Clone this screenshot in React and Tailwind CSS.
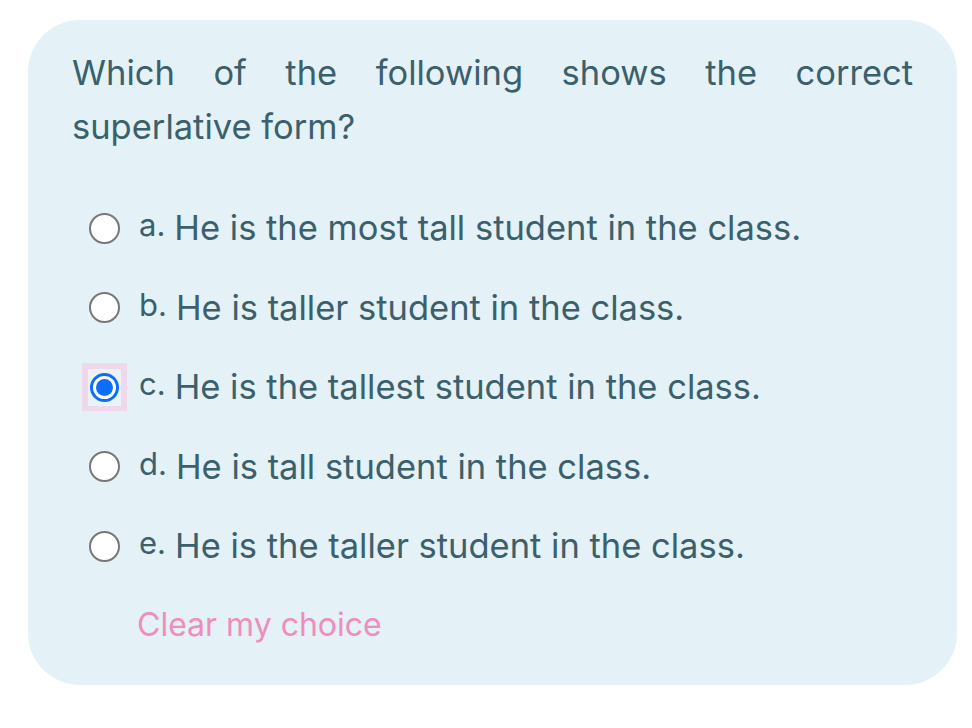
import React from "react";

const options = [
  { l: "a.", t: "He is the most tall student in the class." },
  { l: "b.", t: "He is taller student in the class." },
  { l: "c.", t: "He is the tallest student in the class.", checked: true },
  { l: "d.", t: "He is tall student in the class." },
  { l: "e.", t: "He is the taller student in the class." },
];

function Radio({ checked }) {
  if (checked) {
    return (
      <div className="w-[45px] h-[48px] bg-[#f0d8ec] flex items-center justify-center">
        <div className="w-[33px] h-[37px] bg-[#eaf3f8] flex items-center justify-center">
          <div className="w-[29px] h-[29px] rounded-full border-[3px] border-[#0d6efd] bg-white flex items-center justify-center">
            <div className="w-[17px] h-[17px] rounded-full bg-[#0d6efd]" />
          </div>
        </div>
      </div>
    );
  }
  return (
    <div className="w-[45px] h-[48px] flex items-center justify-center">
      <div className="w-[31px] h-[31px] rounded-full border-2 border-[#777] bg-white" />
    </div>
  );
}

export default function App() {
  return (
    <div className="w-[972px] h-[728px] bg-white pt-[20px] pl-[28px]" style={{ fontFamily: "Inter, 'Noto Sans', sans-serif" }}>
      <div className="w-[929px] h-[665px] rounded-[52px] bg-[#e4f1f7] pl-[44px] pr-[44px] pt-[26px]">
        <p className="text-[34.5px] leading-[54px] text-[#3b5f6b] text-justify">
          Which of the following shows the correct superlative form?
        </p>
        <div className="mt-[50px] flex flex-col gap-[31.5px] pl-[10px]">
          {options.map((o) => (
            <div key={o.l} className="flex items-center h-[48px]">
              <Radio checked={o.checked} />
              <span className="ml-[12px] text-[31px] leading-[40px] text-[#3b5f6b] -translate-y-[3px]">{o.l}</span>
              <span className="ml-[9px] text-[34.5px] leading-[40px] text-[#3b5f6b]">{o.t}</span>
            </div>
          ))}
        </div>
        <div className="mt-[31px] pl-[65px] text-[32px] leading-[48px] text-[#f08dbd]">Clear my choice</div>
      </div>
    </div>
  );
}
